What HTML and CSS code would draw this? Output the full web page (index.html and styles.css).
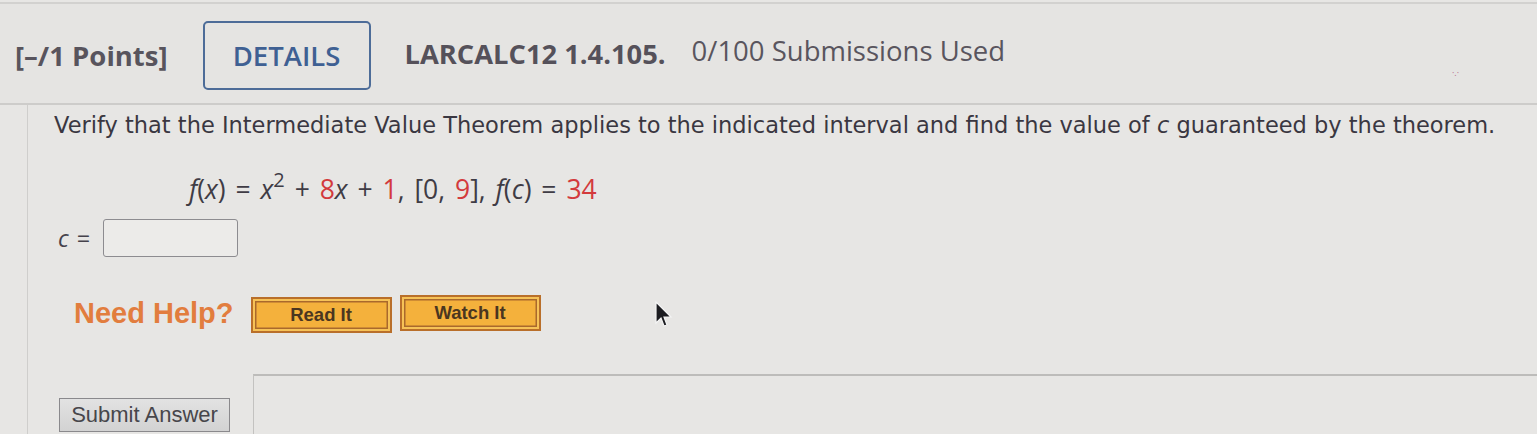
FILE: index.html
```html
<!DOCTYPE html>
<html>
<head>
<meta charset="utf-8">
<link rel="stylesheet" href="styles.css">
</head>
<body>
<div class="page">
  <header class="header">
    <span class="points">[–/1 Points]</span>
    <span class="details">DETAILS</span>
    <span class="code">LARCALC12 1.4.105.</span>
    <span class="subs">0/100 Submissions Used</span>
    <span class="speck">·.·</span>
  </header>
  <main class="question">
    <p class="prompt">Verify that the Intermediate Value Theorem applies to the indicated interval and find the value of <i>c</i> guaranteed by the theorem.</p>
    <p class="formula"><i>f</i>(<i>x</i>) = <i>x</i><sup>2</sup> + <span class="red">8</span><i>x</i> + <span class="red">1</span>, [0, <span class="red">9</span>], <i>f</i>(<i>c</i>) = <span class="red">34</span></p>
    <div class="answer-row">
      <span class="cvar"><i>c</i> =</span>
      <span class="input"></span>
    </div>
    <div class="help-row">
      <span class="need">Need Help?</span>
      <span class="hbtn read">Read It</span>
      <span class="hbtn watch">Watch It</span>
    </div>
    <div class="submit-row">
      <span class="submit">Submit Answer</span>
      <div class="panel"></div>
    </div>
  </main>
  <svg class="cursor" width="20" height="30" viewBox="0 0 20 30">
    <path d="M2 1 L2 22 L7 17 L10 25 L13 24 L10 16 L17 16 Z" fill="#1c1c20" stroke="#f4f4f4" stroke-width="1.2"/>
  </svg>
</div>
</body>
</html>
```
FILE: styles.css
```css
* { box-sizing: border-box; }
html, body { margin: 0; padding: 0; }
body {
  background: #e7e6e4;
  width: 1537px;
  height: 434px;
  overflow: hidden;
}
.page { position: relative; height: 434px; }
.header {
  height: 103px;
  border-top: 2px solid #d2d1cf;
  margin-top: 2px;
  border-bottom: 2px solid #cdccca;
  background: #e5e4e2;
  display: flex;
  align-items: center;
  padding-left: 15px;
  font-family: "Open Sans", sans-serif;
  position: relative;
}
.points {
  font-weight: 700;
  font-size: 27.5px;
  color: #58545d;
  margin-top: 4px;
}
.details {
  margin-left: 35px;
  width: 168px;
  height: 69px;
  border: 2px solid #4d6c98;
  border-radius: 5px;
  display: flex;
  align-items: center;
  justify-content: center;
  font-size: 27.5px;
  font-weight: 600;
  color: #3f6093;
  margin-top: 3px;
}
.code {
  margin-left: 34px;
  font-weight: 700;
  font-size: 27.3px;
  color: #55515a;
  margin-top: -1px;
}
.subs {
  margin-left: 26px;
  font-size: 27.5px;
  color: #59555e;
  margin-top: -6px;
}
.speck {
  position: absolute;
  left: 1452px;
  top: 62px;
  font-size: 9px;
  color: #b56a8a;
}
.question {
  margin-left: 27px;
  border-left: 1px solid #cfcecc;
  padding-left: 26px;
  height: 330px;
  font-family: "DejaVu Sans", Verdana, sans-serif;
  color: #3a3741;
}
.prompt {
  margin: 0;
  padding-top: 6px;
  font-size: 22.5px;
  line-height: 28px;
}
.formula {
  margin: 0;
  padding-top: 34px;
  padding-left: 135px;
  font-family: "Open Sans", sans-serif;
  font-size: 26.5px;
  line-height: 32px;
  color: #3f3c45;
  word-spacing: 3px;
}
.formula sup { font-size: 20px; line-height: 0; vertical-align: 12px; }
.red { color: #d33a3c; }
.answer-row {
  display: flex;
  align-items: center;
  margin-top: 14px;
  height: 38px;
}
.cvar {
  font-family: "Open Sans", sans-serif;
  font-size: 23.5px;
  color: #45424b;
  margin-left: 4px;
  width: 45px;
  word-spacing: 2px;
}
.input {
  width: 135px;
  height: 38px;
  border: 1.5px solid #8d8c90;
  border-radius: 3px;
  background: #ecebe9;
}
.help-row {
  display: flex;
  align-items: center;
  margin-top: 37px;
  height: 38px;
}
.need {
  font-family: "Liberation Sans", Arial, sans-serif;
  font-weight: 700;
  font-size: 29px;
  color: #e27d3e;
  margin-left: 20px;
  margin-right: 17px;
}
.hbtn {
  width: 141px;
  height: 36px;
  display: flex;
  align-items: center;
  justify-content: center;
  font-family: "Liberation Sans", Arial, sans-serif;
  font-weight: 700;
  font-size: 18.5px;
  color: #4a3620;
  background: #f4b13c;
  border: 2px solid #b96f2a;
  box-shadow: inset 0 0 0 2px #f6c257, inset 0 0 0 3.5px #a9692c;
}
.read { margin-top: 3px; }
.watch { margin-left: 8px; }
.submit-row {
  display: flex;
  align-items: flex-end;
  margin-top: 42px;
  height: 60px;
}
.submit {
  margin-left: 5px;
  margin-bottom: 2px;
  width: 171px;
  height: 34px;
  display: flex;
  align-items: center;
  justify-content: center;
  font-family: "Liberation Sans", Arial, sans-serif;
  font-size: 22px;
  color: #47464b;
  background: linear-gradient(#e2e2e2, #d2d2d2);
  border: 1.5px solid #8a898c;
}
.panel {
  margin-left: 23px;
  flex: 1;
  height: 60px;
  border-top: 2px solid #bdbcba;
  border-left: 1.5px solid #c3c2c0;
  align-self: flex-start;
}
.cursor {
  position: absolute;
  left: 654px;
  top: 299px;
}
```
